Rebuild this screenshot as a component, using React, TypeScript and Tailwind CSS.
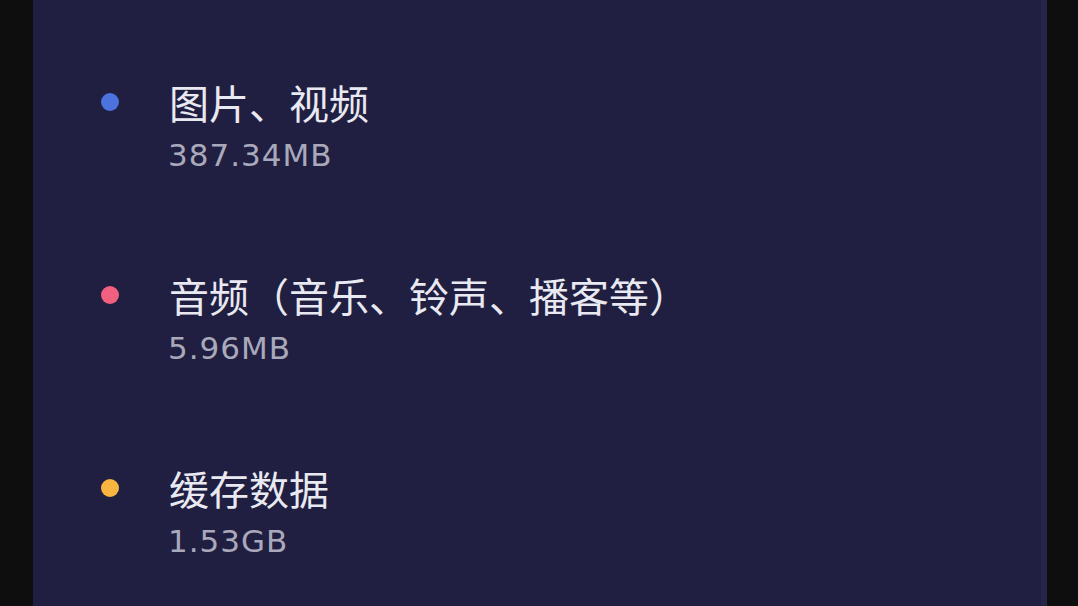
const items = [
  { label: "图片、视频", size: "387.34MB", dot: "bg-[#4c72de]" },
  { label: "音频（音乐、铃声、播客等）", size: "5.96MB", dot: "bg-[#f2607f]" },
  { label: "缓存数据", size: "1.53GB", dot: "bg-[#f8b53f]" },
];

function StorageRow({ label, size, dot }: { label: string; size: string; dot: string }) {
  return (
    <div className="flex flex-col">
      <div className="flex items-center h-[52px]">
        <div className="w-[68px] pl-[68px] box-content flex items-center">
          <span className={`w-[18px] h-[18px] rounded-full ${dot}`} />
        </div>
        <span className="text-[40px] leading-[52px] text-[#e9e9f1] whitespace-nowrap">{label}</span>
      </div>
      <div
        className="pl-[135px] pt-[2px] text-[31px] leading-[50px] tracking-[1px] text-[#a9a9bb] whitespace-nowrap"
        style={{ fontFamily: '"DejaVu Sans", sans-serif' }}
      >
        {size}
      </div>
    </div>
  );
}

export default function App() {
  return (
    <div
      className="w-[1078px] h-[606px] bg-[#0e0e0e] flex overflow-hidden"
      style={{ fontFamily: '"Noto Sans CJK SC", "Noto Sans", sans-serif' }}
    >
      <div className="ml-[33px] w-[1014px] h-full bg-[#201f41] border-r-[6px] border-[#262547] flex flex-col gap-[89px] pt-[76px]">
        {items.map((it) => (
          <StorageRow key={it.label} {...it} />
        ))}
      </div>
    </div>
  );
}
